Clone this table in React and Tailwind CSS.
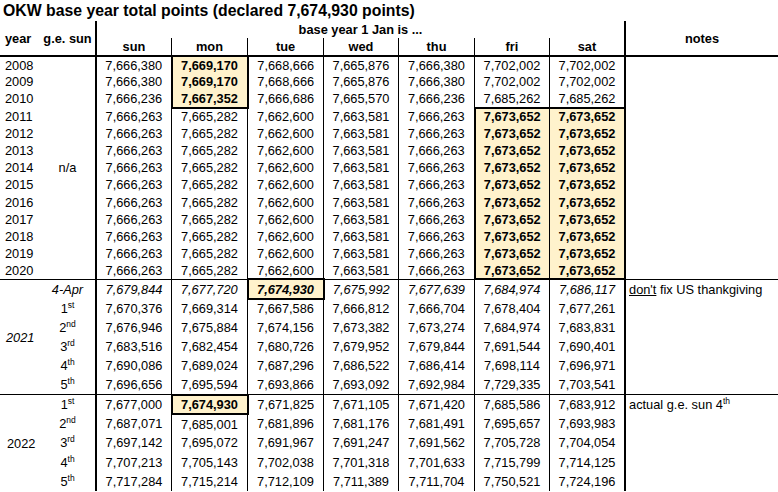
import React from "react";

const DAYS = ["sun", "mon", "tue", "wed", "thu", "fri", "sat"];

const A = ["7,666,380", "7,669,170", "7,668,666", "7,665,876", "7,666,380", "7,702,002", "7,702,002"];
const B = ["7,666,236", "7,667,352", "7,666,686", "7,665,570", "7,666,236", "7,685,262", "7,685,262"];
const C = ["7,666,263", "7,665,282", "7,662,600", "7,663,581", "7,666,263", "7,673,652", "7,673,652"];

const EARLY = [
  ["2008", A], ["2009", A], ["2010", B],
  ["2011", C], ["2012", C], ["2013", C], ["2014", C], ["2015", C], ["2016", C],
  ["2017", C], ["2018", C], ["2019", C], ["2020", C],
];

const Y2021 = [
  ["4-Apr", ["7,679,844", "7,677,720", "7,674,930", "7,675,992", "7,677,639", "7,684,974", "7,686,117"]],
  [["1", "st"], ["7,670,376", "7,669,314", "7,667,586", "7,666,812", "7,666,704", "7,678,404", "7,677,261"]],
  [["2", "nd"], ["7,676,946", "7,675,884", "7,674,156", "7,673,382", "7,673,274", "7,684,974", "7,683,831"]],
  [["3", "rd"], ["7,683,516", "7,682,454", "7,680,726", "7,679,952", "7,679,844", "7,691,544", "7,690,401"]],
  [["4", "th"], ["7,690,086", "7,689,024", "7,687,296", "7,686,522", "7,686,414", "7,698,114", "7,696,971"]],
  [["5", "th"], ["7,696,656", "7,695,594", "7,693,866", "7,693,092", "7,692,984", "7,729,335", "7,703,541"]],
];

const Y2022 = [
  [["1", "st"], ["7,677,000", "7,674,930", "7,671,825", "7,671,105", "7,671,420", "7,685,586", "7,683,912"]],
  [["2", "nd"], ["7,687,071", "7,685,001", "7,681,896", "7,681,176", "7,681,491", "7,695,657", "7,693,983"]],
  [["3", "rd"], ["7,697,142", "7,695,072", "7,691,967", "7,691,247", "7,691,562", "7,705,728", "7,704,054"]],
  [["4", "th"], ["7,707,213", "7,705,143", "7,702,038", "7,701,318", "7,701,633", "7,715,799", "7,714,125"]],
  [["5", "th"], ["7,717,284", "7,715,214", "7,712,109", "7,711,389", "7,711,704", "7,750,521", "7,724,196"]],
];

// highlighted (row, col) — rows 0..12 early, 13..18 2021, 19..23 2022
function hl(r, c) {
  if (c === 1 && r >= 0 && r <= 2) return true;
  if ((c === 5 || c === 6) && r >= 3 && r <= 12) return true;
  if (c === 2 && r === 13) return true;
  if (c === 1 && r === 19) return true;
  return false;
}

const SECTION_END = [12, 18];

function cellClass(r, c) {
  const on = hl(r, c);
  const cls = ["p-0 text-center border-black"];
  if (c === 6 || (on && !hl(r, c + 1))) cls.push("border-r-2");
  else cls.push("border-r");
  if (on && !hl(r, c - 1)) cls.push("border-l-2");
  if (on && !hl(r - 1, c)) cls.push("border-t-2");
  if (on && !hl(r + 1, c)) cls.push("border-b-2");
  else if (SECTION_END.includes(r)) cls.push("border-b");
  if (on) cls.push("bg-[#fff2cc] font-bold");
  return cls.join(" ");
}

function Sup({ children }) {
  return <sup className="text-[8.5px] -top-[5px]">{children}</sup>;
}

function Ord({ v }) {
  if (typeof v === "string") return v;
  return (
    <>
      {v[0]}
      <Sup>{v[1]}</Sup>
    </>
  );
}

function Cells({ r, vals }) {
  return vals.map((v, c) => (
    <td key={c} className={cellClass(r, c)}>
      {v}
    </td>
  ));
}

export default function App() {
  return (
    <div className="w-[778px] h-[492px] overflow-hidden bg-white text-black font-['Liberation_Sans',Arial,sans-serif] text-[12.8px] leading-[15px]">
      <div className="h-[21px] pl-[3px] pt-[2px] text-[15.8px] leading-[18px] font-bold">
        OKW base year total points (declared 7,674,930 points)
      </div>
      <table className="table-fixed border-collapse w-[778px]">
        <colgroup>
          <col className="w-[40px]" />
          <col className="w-[56px]" />
          <col className="w-[75.5px]" />
          <col className="w-[76px]" />
          <col className="w-[76px]" />
          <col className="w-[75px]" />
          <col className="w-[76px]" />
          <col className="w-[75px]" />
          <col className="w-[75.5px]" />
          <col className="w-[153px]" />
        </colgroup>
        <thead>
          <tr className="h-[17px]">
            <th rowSpan={2} className="p-0 pl-[5px] text-left font-bold border-b-2 border-black">year</th>
            <th rowSpan={2} className="p-0 text-center font-bold border-r-2 border-b-2 border-black">g.e. sun</th>
            <th colSpan={7} className="p-0 text-center font-bold border-r-2 border-black">base year 1 Jan is ...</th>
            <th rowSpan={2} className="p-0 text-center font-bold border-b-2 border-black">notes</th>
          </tr>
          <tr className="h-[18px]">
            {DAYS.map((d, i) => (
              <th
                key={d}
                className={`p-0 text-center font-bold border-b-2 border-black ${i === 6 ? "border-r-2" : "border-r"}`}
              >
                {d}
              </th>
            ))}
          </tr>
        </thead>
        <tbody>
          {EARLY.map(([year, vals], r) => (
            <tr key={year} className="h-[17.2px]">
              <td className={`p-0 pl-[5px] border-black ${r === 12 ? "border-b" : ""}`}>{year}</td>
              {r === 0 && (
                <td rowSpan={13} className="p-0 text-center border-r-2 border-b border-black">n/a</td>
              )}
              <Cells r={r} vals={vals} />
              {r === 0 && <td rowSpan={13} className="p-0 border-b border-black"></td>}
            </tr>
          ))}
          {Y2021.map(([ge, vals], i) => {
            const r = 13 + i;
            const first = i === 0;
            return (
              <tr key={r} className={`h-[19.2px] ${first ? "italic" : ""}`}>
                {first && (
                  <td rowSpan={6} className="p-0 pl-[6px] italic border-b border-black">2021</td>
                )}
                <td className={`p-0 text-center border-r-2 border-black ${i === 5 ? "border-b" : ""}`}>
                  <Ord v={ge} />
                </td>
                <Cells r={r} vals={vals} />
                <td className={`p-0 pl-[3px] not-italic whitespace-nowrap border-black ${i === 5 ? "border-b" : ""}`}>
                  {first && (
                    <>
                      <span className="underline">don't</span> fix US thankgiving
                    </>
                  )}
                </td>
              </tr>
            );
          })}
          {Y2022.map(([ge, vals], i) => {
            const r = 19 + i;
            const first = i === 0;
            return (
              <tr key={r} className="h-[19.3px]">
                {first && (
                  <td rowSpan={5} className="p-0 pl-[7px]">2022</td>
                )}
                <td className="p-0 text-center border-r-2 border-black">
                  <Ord v={ge} />
                </td>
                <Cells r={r} vals={vals} />
                <td className="p-0 pl-[3px] whitespace-nowrap">
                  {first && (
                    <>
                      actual g.e. sun 4<Sup>th</Sup>
                    </>
                  )}
                </td>
              </tr>
            );
          })}
        </tbody>
      </table>
    </div>
  );
}
